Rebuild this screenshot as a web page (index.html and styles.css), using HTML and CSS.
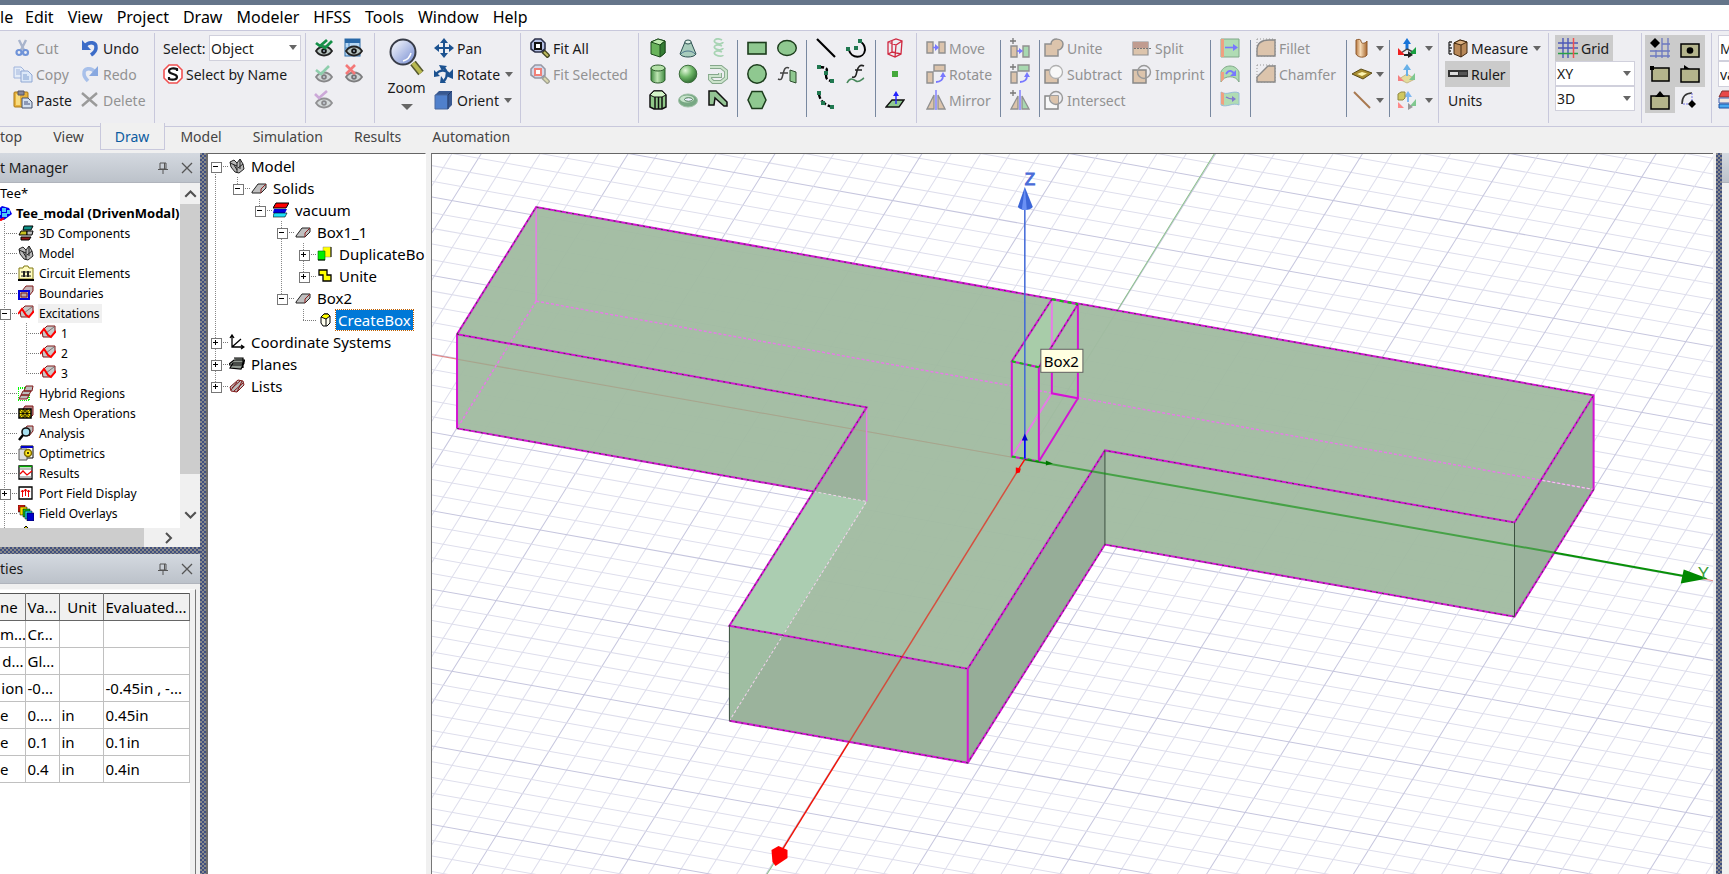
FILE: index.html
```html
<!DOCTYPE html>
<html lang="en">
<head>
    <meta charset="UTF-8">
    <meta name="viewport" content="width=device-width, initial-scale=1.0">
    <title>Tee - HFSS Modeler</title>
    <link rel="stylesheet" href="styles.css">
</head>
<body>
    <svg class="defs" aria-hidden="true">
        <defs>
            <linearGradient id="gGreen"><stop offset="0" stop-color="#3f8a40"/><stop offset=".45" stop-color="#bfe6b4"/><stop offset="1" stop-color="#3f8a40"/></linearGradient>
            <radialGradient id="gBall" cx=".35" cy=".3" r=".75"><stop offset="0" stop-color="#e4f8dc"/><stop offset=".5" stop-color="#6fb768"/><stop offset="1" stop-color="#2d6a30"/></radialGradient>
            <linearGradient id="gLens" x1="0" y1="0" x2="1" y2="1"><stop offset="0" stop-color="#fff"/><stop offset="1" stop-color="#7088d0"/></linearGradient>
            <linearGradient id="gTube"><stop offset="0" stop-color="#b87840"/><stop offset=".4" stop-color="#f6dcb8"/><stop offset="1" stop-color="#a86830"/></linearGradient>
        </defs>
        <symbol id="cut" viewBox="0 0 20 20"><path d="M6 2l5 10M13 2L8 12" stroke="#a8b4cc" stroke-width="2.4" fill="none"/><circle cx="6" cy="14.500" r="2.500" fill="none" stroke="#6f93d8" stroke-width="2.200"/><circle cx="12.500" cy="14.500" r="2.500" fill="none" stroke="#6f93d8" stroke-width="2.200"/></symbol>
        <symbol id="copy" viewBox="0 0 20 20"><path d="M1 3h7l3 3v8H1z" fill="#e4ecf8" stroke="#a0b4dc"/><path d="M3 6h4M3 8h5M3 10h5" stroke="#a0b4dc"/><path d="M8 7h7l4 4v7H8z" fill="#dce8f8" stroke="#90a8d4"/><path d="M10 11h4M10 13h6M10 15h6" stroke="#80a0d0"/></symbol>
        <symbol id="paste" viewBox="0 0 20 20"><rect x="1" y="2" width="14" height="15" rx="1" fill="#e8b23c" stroke="#a87818"/><rect x="3" y="4" width="4" height="11" fill="#f8dc80"/><path d="M5 1h6v4H5z" fill="#889" stroke="#556"/><path d="M9 8h6l4 4v6H9z" fill="#d4e0f0" stroke="#44506c"/><path d="M11 12h4M11 14h6" stroke="#44507c"/></symbol>
        <symbol id="undo" viewBox="0 0 20 20"><path d="M5 8c4-5 12-4 11 2 0 3-2 5-5 7" fill="none" stroke="#3c6cc8" stroke-width="3.600"/><path d="M2 2v10h9z" fill="#3c6cc8"/></symbol>
        <symbol id="redo" viewBox="0 0 20 20"><path d="M15 8C11 3 3 4 4 10c0 3 2 5 4 7" fill="none" stroke="#a8c0ea" stroke-width="3.600"/><path d="M18 2v10H9z" fill="#88a8e0"/></symbol>
        <symbol id="del" viewBox="0 0 20 20"><path d="M2 3l15 13M17 3L2 16" stroke="#9a9a9a" stroke-width="2.400"/></symbol>
        <symbol id="byname" viewBox="0 0 20 20"><path d="M6 1h8l5 5v8l-5 5H6l-5-5V6z" fill="#fff" stroke="#f05050" stroke-width="1.600"/><path d="M14 7V5c-3-1-8-1-8 2 0 4 8 2 8 6 0 3-5 3-8 2v-2" fill="none" stroke="#111" stroke-width="2.200"/></symbol>
        <symbol id="eye" viewBox="0 0 20 20"><path d="M2 13c4-6 12-6 16 0-4 6-12 6-16 0z" fill="#b8c4c0" stroke="#222" stroke-width="1.800"/><circle cx="10" cy="13" r="2.800" fill="#111"/><circle cx="10" cy="13" r="1" fill="#9ab"/></symbol>
        <symbol id="showall" viewBox="0 0 20 20"><use href="#eye"/><path d="M2 5l4 3 7-6M7 7l4 3 7-7" fill="none" stroke="#149048" stroke-width="2.800"/></symbol>
        <symbol id="showone" viewBox="0 0 20 20"><g opacity=".5"><use href="#eye"/><path d="M2 6l5 4 8-8" fill="none" stroke="#30b068" stroke-width="2.600"/></g></symbol>
        <symbol id="showtab" viewBox="0 0 20 20"><rect x="1" y="1" width="15" height="17" fill="#b8d8f4" stroke="#2c6ca8"/><path d="M1 1h15v4H1z" fill="#2868a8"/><path d="M5 5v13M1 10h15" stroke="#4888c8"/><use href="#eye"/></symbol>
        <symbol id="hide" viewBox="0 0 20 20"><g opacity=".55"><use href="#eye"/></g><path d="M2 1l9 9M11 1l-9 9" stroke="#f47878" stroke-width="2.600"/></symbol>
        <symbol id="hidep" viewBox="0 0 20 20"><g opacity=".45"><use href="#eye"/></g><path d="M1 4l4 4 8-7" fill="none" stroke="#cca8d8" stroke-width="2.600"/></symbol>
        <symbol id="lens" viewBox="0 0 36 38"><path d="M24 25l8 10" stroke="#555830" stroke-width="7"/><path d="M24 25l8 10" stroke="#b8b850" stroke-width="4"/><circle cx="14" cy="14" r="12.500" fill="url(#gLens)" stroke="#383c48" stroke-width="2"/><path d="M22 15c-1 4-4 7-8 8" fill="none" stroke="#fff" stroke-width="1.500"/></symbol>
        <symbol id="pan" viewBox="0 0 20 20"><path d="M10 3v14M3 10h14" stroke="#1c5290" stroke-width="2"/><path d="M10 0l4 5H6zM10 20l4-5H6zM0 10l5-4v8zM20 10l-5-4v8z" fill="#1c5290"/></symbol>
        <symbol id="rot" viewBox="0 0 20 20"><path d="M9 3c5 4 5 9 1 14M2 10c4-5 10-5 16 3" stroke="#1c5290" stroke-width="2.200" fill="none"/><path d="M5 1l8 1-5 5zM6 19l1-7 5 7zM0 13V6l6 6zM19 5v10l-7-3z" fill="#1c5290"/></symbol>
        <symbol id="orient" viewBox="0 0 20 20"><path d="M1 5l4-4h13v14l-4 4H1z" fill="#385890"/><path d="M1 5h13v14H1z" fill="#5080cc" stroke="#4868a0"/><path d="M14 5l4-4M14 5v14" stroke="#203868"/></symbol>
        <symbol id="fit" viewBox="0 0 20 20"><path d="M13 13l6 6" stroke="#444620" stroke-width="4.600"/><path d="M14 14l4 4" stroke="#c0bc60" stroke-width="2"/><path d="M5 1h6l4 4v6l-4 3H5l-4-3V5z" fill="#b4c0e4" stroke="#2c3048" stroke-width="1.600"/><rect x="5" y="5" width="6" height="6" fill="#fff" stroke="#111" stroke-width="2"/></symbol>
        <symbol id="fitsel" viewBox="0 0 20 20"><g opacity=".45"><use href="#fit"/></g><rect x="5" y="5" width="6" height="6" fill="#fff" stroke="#f08078" stroke-width="2"/></symbol>

        <symbol id="box" viewBox="0 0 20 20"><path d="M3 4l7-3 7 2v12l-5 4-9-3z" fill="#6ab45c" stroke="#1c4c1c"/><path d="M3 4l7-3 7 2-5 4z" fill="#c0ecb0" stroke="#1c4c1c"/><path d="M12 7l5-4v12l-5 4z" fill="#347c34" stroke="#1c4c1c"/></symbol>
        <symbol id="cone" viewBox="0 0 20 20"><path d="M7 4l-5 12c2 4 14 4 16 0L13 4z" fill="#a8ccbc" stroke="#2c5050"/><ellipse cx="10" cy="4" rx="3.200" ry="2" fill="#e0f0e8" stroke="#2c5050"/><path d="M3 16c3-4 11-4 14 0" fill="none" stroke="#507890"/></symbol>
        <symbol id="helix" viewBox="0 0 20 20"><path d="M14 2C8-1 4 3 8 5s7 0 7-1M14 8C8 5 4 9 8 11s7 0 7-1M14 14c-6-3-10 1-6 3s7 1 7 0" fill="none" stroke="#a8d4b4" stroke-width="1.800"/></symbol>
        <symbol id="cyl" viewBox="0 0 20 20"><path d="M3 4v12c1 4 13 4 14 0V4z" fill="url(#gGreen)" stroke="#2c5c2c"/><ellipse cx="10" cy="4" rx="7" ry="3" fill="#b4e0a8" stroke="#2c5c2c"/></symbol>
        <symbol id="ball" viewBox="0 0 20 20"><circle cx="10" cy="10" r="8.800" fill="url(#gBall)" stroke="#3c6c3c"/></symbol>
        <symbol id="spiral" viewBox="0 0 20 20"><path d="M2 3h11l5 4v7l-5 4H5l-3-3v-3h10V9" fill="none" stroke="#86a88c" stroke-width="4"/><path d="M2 3h11l5 4v7l-5 4H5l-3-3v-3h10V9" fill="none" stroke="#cce4cc" stroke-width="2.200"/></symbol>
        <symbol id="prism" viewBox="0 0 20 20"><path d="M2 5l4-4h8l4 4v12l-4 2H6l-4-2z" fill="#90c888" stroke="#111" stroke-width="1.500"/><path d="M2 5l4 2h8l4-2-4-4H6z" fill="#d4f4c8" stroke="#111"/><path d="M7 7v12M10.500 7v12M14 7v12" stroke="#111" stroke-width="1.500"/></symbol>
        <symbol id="torus" viewBox="0 0 20 20"><ellipse cx="10" cy="10.500" rx="9.500" ry="6.500" fill="#78a884" stroke="#9fc0a6"/><ellipse cx="9" cy="9" rx="7" ry="3.500" fill="#c8e4cc"/><ellipse cx="10.500" cy="9.500" rx="4" ry="1.800" fill="#eef" stroke="#4c7c58"/></symbol>
        <symbol id="bond" viewBox="0 0 20 20"><path d="M1 1h7l11 11v4h-3L7 8l-1 7H1z" fill="#94c494" stroke="#111" stroke-width="1.500"/></symbol>
        <symbol id="rect" viewBox="0 0 20 20"><rect x="1" y="4.500" width="18" height="11.500" fill="#8fc890" stroke="#1c3c1c" stroke-width="1.600"/></symbol>
        <symbol id="ell" viewBox="0 0 20 20"><ellipse cx="10" cy="10" rx="9.300" ry="7.500" fill="#8fc890" stroke="#1c3c1c" stroke-width="1.400"/></symbol>
        <symbol id="circ" viewBox="0 0 20 20"><circle cx="10" cy="10" r="9.200" fill="#8fc890" stroke="#1c3c1c" stroke-width="1.500"/></symbol>
        <symbol id="eqs" viewBox="0 0 20 20"><path d="M1 15c4 2 4-1 5-5s2-8 6-6M3 9h8" fill="none" stroke="#444" stroke-width="1.500"/><path d="M13 6l6 2v11l-6-2z" fill="#8fc890" stroke="#2c4c2c"/></symbol>
        <symbol id="hex" viewBox="0 0 20 20"><path d="M5 1.500h10l4 8.500-4 8.500H5L1 10z" fill="#8fc890" stroke="#1c3c1c" stroke-width="1.500"/></symbol>
        <symbol id="line" viewBox="0 0 20 20"><path d="M1 1l18 18" stroke="#000" stroke-width="2.200"/></symbol>
        <symbol id="arc3" viewBox="0 0 20 20"><path d="M3 12c2 9 15 9 16 0 0-4-1-6-4-8" fill="none" stroke="#000" stroke-width="2"/><path d="M0 9h4v4H0zM8 8h4v4H8zM12 1h4v4h-4z" fill="#207850"/></symbol>
        <symbol id="spline" viewBox="0 0 20 20"><path d="M3 3c12 0 7 5 7 7s-1 7 7 7" fill="none" stroke="#000" stroke-width="2.400" stroke-dasharray="5 2"/><path d="M1 1h4v4H1zM8 7h4v4H8zM14 15h4v4h-4z" fill="#207850"/></symbol>
        <symbol id="eqc" viewBox="0 0 20 20"><path d="M6 13c4 1 4-2 5-6s3-7 7-5M9 6h7" fill="none" stroke="#222" stroke-width="1.600"/><path d="M1 19c3-6 6-4 9-2s6-2 8-3" fill="none" stroke="#48885c" stroke-width="1.600"/></symbol>
        <symbol id="arcc" viewBox="0 0 20 20"><path d="M3 3c0 7 5 12 14 14" fill="none" stroke="#000" stroke-width="2.400" stroke-dasharray="6 2"/><path d="M1 1h4v4H1zM5 11h4v4H5zM14 15h4v4h-4z" fill="#207850"/></symbol>
        <symbol id="region" viewBox="0 0 20 20"><path d="M3 4l8-3 6 2-1 13-6 3-7-3zM3 4l8 3 6-4M11 7l-1 12M7 2v12l-4 2M7 14l9 2" fill="none" stroke="#d02840" stroke-width="1.300"/></symbol>
        <symbol id="point" viewBox="0 0 20 20"><path d="M7 7h6v6H7z" fill="#44a83c"/></symbol>
        <symbol id="plane" viewBox="0 0 20 20"><path d="M1 17l6-7h12l-5 7z" fill="#8fc890" stroke="#111" stroke-width="1.300"/><path d="M11 14V4" stroke="#22f" stroke-width="1.400"/><path d="M11 1l3 5H8z" fill="#22f"/></symbol>

        <symbol id="move" viewBox="0 0 20 20"><path d="M1 4h6v11H1zM13 4h6v11h-6z" fill="#dcc4ac" stroke="#909090" stroke-width="1.400"/><path d="M7 9.500h3" stroke="#7878ff" stroke-width="1.600"/><path d="M9 6l4 3.500L9 13z" fill="#7878ff"/></symbol>
        <symbol id="rotate" viewBox="0 0 20 20"><path d="M1 8h6v11H1zM8 1h11v6H8z" fill="#dcc4ac" stroke="#909090" stroke-width="1.400"/><path d="M10 18c5 0 7-3 7-6" fill="none" stroke="#7878ff" stroke-width="1.800"/><path d="M17 8l3 5h-6z" fill="#7878ff"/></symbol>
        <symbol id="mirror" viewBox="0 0 20 20"><path d="M8 5v14H1zM12 5v14h7z" fill="#dcc4ac" stroke="#909090" stroke-width="1.300"/><path d="M10 0v20" stroke="#8080ff" stroke-width="1.500"/></symbol>
        <symbol id="dmove" viewBox="0 0 20 20"><path d="M1 8h6v11H1z" fill="#dcc4ac" stroke="#909090" stroke-width="1.400"/><path d="M13 8h6v11h-6z" fill="#a8d8b0" stroke="#909090" stroke-width="1.400"/><path d="M3 0v6M0 3h6" stroke="#777" stroke-width="1.300"/><path d="M7 13h3" stroke="#7878ff" stroke-width="1.600"/><path d="M9 10l4 3-4 3z" fill="#7878ff"/></symbol>
        <symbol id="drot" viewBox="0 0 20 20"><path d="M1 8h6v11H1z" fill="#dcc4ac" stroke="#909090" stroke-width="1.400"/><path d="M8 1h11v6H8z" fill="#a8d8b0" stroke="#909090" stroke-width="1.400"/><path d="M3 0v6M0 3h6" stroke="#777" stroke-width="1.300"/><path d="M10 18c5 0 7-3 7-6" fill="none" stroke="#7878ff" stroke-width="1.800"/><path d="M17 8l3 5h-6z" fill="#7878ff"/></symbol>
        <symbol id="dmir" viewBox="0 0 20 20"><path d="M8 6v13H1z" fill="#dcc4ac" stroke="#909090" stroke-width="1.300"/><path d="M12 6v13h7z" fill="#a8d8b0" stroke="#909090" stroke-width="1.300"/><path d="M3 0v6M0 3h6" stroke="#777" stroke-width="1.300"/><path d="M10 0v20" stroke="#8080ff" stroke-width="1.500"/></symbol>
        <symbol id="unite" viewBox="0 0 20 20"><path d="M1 6h6c0-7 12-6 12 0 0 4-3 6-5 6v6H1z" fill="#dcc4ac" stroke="#909090" stroke-width="1.500"/></symbol>
        <symbol id="subtract" viewBox="0 0 20 20"><path d="M1 6h13v13H1z" fill="#dcc4ac" stroke="#888" stroke-width="1.500"/><circle cx="12" cy="8" r="6.500" fill="#f8f8f8" stroke="#b0b0b0" stroke-width="1.300"/></symbol>
        <symbol id="intersect" viewBox="0 0 20 20"><path d="M1 6h13v13H1z" fill="#f8f8f8" stroke="#888" stroke-width="1.500"/><path d="M6 6h8v8C9 15 6 11 6 6z" fill="#dcc4ac"/><circle cx="12" cy="8" r="6.500" fill="none" stroke="#999" stroke-width="1.400"/></symbol>
        <symbol id="split" viewBox="0 0 20 20"><path d="M1 4h15v13H1z" fill="#dcc4ac" stroke="#909090" stroke-width="1.200"/><path d="M1 4h15v6H1z" fill="#c09c90"/><path d="M2 10.500h18" stroke="#777" stroke-dasharray="2 1"/></symbol>
        <symbol id="imprint" viewBox="0 0 20 20"><path d="M1 6h13v13H1z" fill="#dcc4ac" stroke="#888" stroke-width="1.500"/><circle cx="12" cy="8" r="6.500" fill="none" stroke="#999" stroke-width="1.400"/></symbol>
        <symbol id="sweep1" viewBox="0 0 20 20"><path d="M1 1h18v18H1z" fill="#b0dcb4" stroke="#80a888"/><path d="M1 1h3v18H1z" fill="#f0a080"/><path d="M5 9.500h9" stroke="#7878ff" stroke-width="1.600"/><path d="M13 6l5 3.500-5 3.500z" fill="#7878ff"/></symbol>
        <symbol id="sweep2" viewBox="0 0 20 20"><path d="M1 18V8c3-8 15-8 18 0v10c-3-7-15-7-18 0z" fill="#b0dcb4" stroke="#80a888"/><path d="M1 8h3v7l-3 3z" fill="#f0a080"/><path d="M6 10c3-5 7-3 8 0" fill="none" stroke="#7878ff" stroke-width="1.800"/><path d="M16 6v6h-6z" fill="#7878ff"/></symbol>
        <symbol id="sweep3" viewBox="0 0 20 20"><path d="M1 2c6 4 12-2 18 1v12c-6-3-12 3-18 0z" fill="#b0dcb4" stroke="#98bcd8"/><path d="M1 2l3 1v12l-3-1z" fill="#f0a080"/><path d="M6 7c3 2 4 2 7 2" fill="none" stroke="#8078d0" stroke-width="1.500"/><path d="M12 6l4 3-4 3z" fill="#8078d0"/></symbol>
        <symbol id="fillet" viewBox="0 0 20 20"><path d="M1 1h18v17H1z" fill="none" stroke="#999" stroke-dasharray="1 2"/><path d="M1 18v-6C1 5 6 2 13 2h6v16z" fill="#dcc4ac" stroke="#888" stroke-width="1.400"/></symbol>
        <symbol id="chamfer" viewBox="0 0 20 20"><path d="M1 1h18v17H1z" fill="none" stroke="#999" stroke-dasharray="1 2"/><path d="M1 18v-5L12 2h7v16z" fill="#dcc4ac" stroke="#888" stroke-width="1.400"/></symbol>
        <symbol id="tube" viewBox="0 0 20 20"><path d="M4 2v14c2 4 9 4 11 1V3c-2 3-6 3-6 0 0-2-3-2-5-1z" fill="url(#gTube)" stroke="#905c30"/></symbol>
        <symbol id="sheet" viewBox="0 0 20 20"><path d="M0 10l9-5 11 4-9 6z" fill="#a88c30" stroke="#5c4c18"/><path d="M5 10l5-2 5 1.500-5 2.500z" fill="#fcf4b0"/></symbol>
        <symbol id="wire" viewBox="0 0 20 20"><path d="M2 2l16 16" stroke="#a87850" stroke-width="2"/></symbol>
        <symbol id="cs" viewBox="0 0 20 20"><path d="M10 11V4" stroke="#1874d8" stroke-width="3"/><path d="M10 0l4 6H6z" fill="#1874d8"/><path d="M10 11l-6 4M10 11l6 3" stroke="#444" stroke-width="1.500"/><path d="M1 10v7h7z" fill="#f02020"/><path d="M19 9v7h-7z" fill="#18a040"/><path d="M7 17h5" stroke="#222" stroke-width="2"/><path d="M11 13l5 4-5 3z" fill="#222"/></symbol>
        <symbol id="cs2" viewBox="0 0 20 20"><path d="M2 15l8-5 8 5-8 4z" fill="#e4dc9c" stroke="#c8b888"/><path d="M10 12V4" stroke="#68b0e8" stroke-width="2"/><path d="M10 0l4 6H6z" fill="#68b0e8"/><path d="M1 11v6h6z" fill="#f48080"/><path d="M18 9v7h-6z" fill="#80c890"/></symbol>
        <symbol id="cs3" viewBox="0 0 20 20"><path d="M11 12V5" stroke="#80b8f0" stroke-width="2"/><path d="M11 1l4 6H7z" fill="#80b8f0"/><path d="M1 4l3-2h4v6l-2 2H1z" fill="#d0c860" stroke="#908840"/><path d="M1 12v6h6z" fill="#f88"/><path d="M19 9v7h-6z" fill="#80c890"/><path d="M11 13l5 4-5 3z" fill="#999"/></symbol>
        <symbol id="measure" viewBox="0 0 20 20"><path d="M1 4v12M1 4h3M1 7h2M1 10h3M1 13h2M1 16h3" stroke="#333" stroke-width="1.300"/><path d="M6 5l6-3 7 2v11l-6 4-7-3z" fill="#b88858" stroke="#402810"/><path d="M6 5l6-3 7 2-6 3z" fill="#dcb080" stroke="#402810"/><path d="M13 7v12" stroke="#402810"/></symbol>
        <symbol id="ruler" viewBox="0 0 20 20"><path d="M0 6h20v7H0z" fill="#333"/><path d="M2 8h8v3H2z" fill="#ddd"/><path d="M11 8h8v3h-8z" fill="#555"/></symbol>
        <symbol id="gridic" viewBox="0 0 20 20"><path d="M5 0v20M10 0v20M0 5h20M0 10h20" stroke="#4c58b8" stroke-width="1.400"/><path d="M0 15.500h20" stroke="#28a048" stroke-width="1.500"/><path d="M15.500 0v20" stroke="#f05050" stroke-width="1.500"/></symbol>
        <symbol id="snapgrid" viewBox="0 0 20 20"><path d="M12 0v20M18 0v20M6 12v8M0 13h20M0 18h20M12 6h8" stroke="#6c78c0" stroke-width="1.300"/><path d="M5 0l5 5-5 5-5-5z" fill="#000"/></symbol>
        <symbol id="snapcen" viewBox="0 0 20 20"><path d="M1 6h18v13H1z" fill="#b4b48c" stroke="#000" stroke-width="1.500"/><circle cx="10" cy="12.500" r="3.300"/></symbol>
        <symbol id="snapver" viewBox="0 0 20 20"><path d="M2 4h17v13H2z" fill="#b4b48c" stroke="#000" stroke-width="1.500"/><path d="M0 2h4v4H0z"/></symbol>
        <symbol id="snapmid" viewBox="0 0 20 20"><path d="M1 5h18v13H1z" fill="#b4b48c" stroke="#000" stroke-width="1.500"/><path d="M4 1l6 4H4z"/></symbol>
        <symbol id="snapedge" viewBox="0 0 20 20"><path d="M1 6h18v13H1z" fill="#b4b48c" stroke="#000" stroke-width="1.500"/><path d="M10 1l5 6H5z"/></symbol>
        <symbol id="snapquad" viewBox="0 0 20 20"><path d="M2 14C2 6 6 3 12 3" fill="none" stroke="#333" stroke-width="1.600"/><path d="M12 3v10M3 14h8" stroke="#7878e8" stroke-dasharray="2 1"/><path d="M12 10l4 4-4 4-4-4z"/></symbol>
        <symbol id="mat" viewBox="0 0 20 20"><path d="M4 1h12l4 6H1z" fill="#e84848" stroke="#803030"/><path d="M1 8h19l-3 5H1z" fill="#f0e8e0" stroke="#4060b0"/><path d="M1 14h19l-4 4H1z" fill="#48a8f0" stroke="#2050a0"/></symbol>

        <symbol id="t-slab" viewBox="0 0 16 16"><path d="M1 12l6-8h8v4l-5 5H1z" fill="#c0c0c0" stroke="#222"/><path d="M10 13V9l5-5" fill="none" stroke="#902020"/></symbol>
        <symbol id="t-design" viewBox="0 0 16 16"><path d="M0 12l8 3 8-6-3-6-7-2-6 5z" fill="#00e"/><path d="M1 6h4v4H1zM6 3h4v4H6zM6 8h5v4H6zM11 5h3v4h-3z" fill="#4cc8f8"/><path d="M0 14l5 1 3-2" stroke="#f00" stroke-width="2" fill="none"/></symbol>
        <symbol id="t-comp" viewBox="0 0 16 16"><path d="M6 1h9l-2 4H5z" fill="#109088" stroke="#000"/><path d="M1 10l2-4h6v4H1z" fill="#c8c020" stroke="#000"/><path d="M9 10V6h6l-1 4z" fill="#bbb" stroke="#000"/><path d="M3 12h10l-2 3H3z" fill="#901818" stroke="#000"/></symbol>
        <symbol id="t-model" viewBox="0 0 16 16"><path d="M1 4l4-2 3 3 3-4 3 5 1 5-5 4-4-1-4-5z" fill="#b8b8b8" stroke="#222"/><path d="M8 5v10M11 1v10M5 7l3 5M1 5l7 3M14 6l-5 4" stroke="#222" fill="none"/></symbol>
        <symbol id="t-circ" viewBox="0 0 16 16"><path d="M1 3h4l1-2h4l1 2h4v11H1z" fill="#fffcc0" stroke="#807810"/><path d="M0 15h16" stroke="#000" stroke-width="2"/><path d="M5 6h2v6H5zM9 6h2v6H9z" fill="#222"/><path d="M3 7h10M3 11h10" stroke="#222"/></symbol>
        <symbol id="t-bound" viewBox="0 0 16 16"><path d="M4 6l4-5h7v5l-4 5" fill="#c8b8b8" stroke="#801818"/><path d="M1 6h10v8H1z" fill="#c0b0b0" stroke="#00d" stroke-width="2"/><path d="M3 8h6v4H3z" fill="#b8a8a8" stroke="#801818"/></symbol>
        <symbol id="t-exc" viewBox="0 0 16 16"><path d="M2 6l5-5h8v7l-4 4H3z" fill="#c8c8c8" stroke="#801818"/><path d="M6 8l8-6" stroke="#777"/><path d="M0 9l4-5 4 6 3 2 5-6" fill="none" stroke="#f00" stroke-width="2"/></symbol>
        <symbol id="t-hyb" viewBox="0 0 16 16"><path d="M0 3h11v13H0z" fill="none" stroke="#0f0" stroke-width="2" stroke-dasharray="1 1"/><path d="M1 14l2-4h8l-2 4zM3 10l2-4h8l-2 4zM6 6l2-5h7l-1 5z" fill="#bbb" stroke="#801818"/></symbol>
        <symbol id="t-mesh" viewBox="0 0 16 16"><path d="M5 4l2-3h8v9l-3 3" fill="#b88" stroke="#801818"/><path d="M1 4h12v9H1z" fill="#ffe800" stroke="#000" stroke-width="1.500"/><path d="M1 8.500h12M5 4v9M9 4v9M1 4l8 9M5 4l8 9M13 4l-8 9M9 4l-8 9" stroke="#000" stroke-width=".8"/></symbol>
        <symbol id="t-ana" viewBox="0 0 16 16"><path d="M6 5l3-4h6v5l-4 5" fill="#bbb" stroke="#801818"/><circle cx="8" cy="7" r="4" fill="#a8e0f0" stroke="#111" stroke-width="1.600"/><path d="M5 10l-4 5" stroke="#000" stroke-width="2.500"/></symbol>
        <symbol id="t-opt" viewBox="0 0 16 16"><path d="M3 1h12v12H3z" fill="#fff" stroke="#000"/><path d="M3 1h12v2H3z" fill="#00c"/><path d="M1 4h8v11H1z" fill="#ddd" stroke="#555"/><circle cx="10" cy="8" r="3.500" fill="#ffe820" stroke="#806c00" stroke-width="1.500"/><circle cx="10" cy="8" r="1"/></symbol>
        <symbol id="t-res" viewBox="0 0 16 16"><path d="M1 1h13v13H1z" fill="#fff" stroke="#000" stroke-width="1.300"/><path d="M1 1.500h13" stroke="#0a0" stroke-width="1.500"/><path d="M1 4h13M1 12h13" stroke="#777"/><path d="M2 9l3-3 4 4 5-4" fill="none" stroke="#e00" stroke-width="1.300"/></symbol>
        <symbol id="t-port" viewBox="0 0 16 16"><path d="M1 2h13v12H1z" fill="#fff" stroke="#000" stroke-width="1.300"/><path d="M4.500 12V5M7.500 11V4M10.500 12V5M3 7l1.500-2L6 7M6 6l1.500-2L9 6M9 7l1.500-2L12 7" fill="none" stroke="#e00"/></symbol>
        <symbol id="t-over" viewBox="0 0 16 16"><path d="M0 0h7v7H0z" fill="#e82010" stroke="#000" stroke-width=".5"/><path d="M2 2h7v8H2z" fill="#f8e000" stroke="#000" stroke-width=".5"/><path d="M5 4h7v8H5z" fill="#10c020" stroke="#000" stroke-width=".5"/><path d="M7 6h7v8H7z" fill="#20c8e8" stroke="#000" stroke-width=".5"/><path d="M9 8h7v8H9z" fill="#00c" stroke="#000" stroke-width=".5"/></symbol>
        <symbol id="t-next" viewBox="0 0 16 16"><path d="M8 1l4 4H4z" fill="#e0d000" stroke="#000"/></symbol>
        <symbol id="t-vac" viewBox="0 0 16 16"><path d="M3 1h13l-3 5H0z" fill="#f00" stroke="#000"/><path d="M1 7h13l-2 4H0z" fill="#00d"/><path d="M1 11h13l-2 4H0z" fill="#20e0f8" stroke="#000" stroke-width=".6"/></symbol>
        <symbol id="t-dup" viewBox="0 0 16 16"><path d="M6 1h8v10H6z" fill="#ff0" stroke="#888" stroke-width=".5"/><path d="M1 5h7v9H1z" fill="#0e0" stroke="#060" stroke-width=".6"/><path d="M14 1v10M8 14H1" stroke="#000"/></symbol>
        <symbol id="t-unite" viewBox="0 0 16 16"><path d="M2 2h8v5h4v6H6V7H2z" fill="#ff0" stroke="#000" stroke-width="1.300"/></symbol>
        <symbol id="t-create" viewBox="0 0 16 16"><path d="M4 5l3-3h4l2 2v7l-3 3H6l-2-3z" fill="#fffff0" stroke="#000"/><path d="M4 5l3-3h4l2 2-4 3z" fill="#ff0" stroke="#000"/><path d="M9 7v7" stroke="#000"/></symbol>
        <symbol id="t-cs" viewBox="0 0 16 16"><path d="M3 2v11h11M3 13L12 5M1 4l2-3 2 3M12 11l3 2-3 2" fill="none" stroke="#000" stroke-width="1.300"/></symbol>
        <symbol id="t-planes" viewBox="0 0 16 16"><path d="M0 8l5-4h11l-3 5H0zM1 12l3-5h11l-3 6zM5 2h9v10" fill="#909890" stroke="#000" stroke-width="1.200"/></symbol>
        <symbol id="t-lists" viewBox="0 0 16 16"><path d="M1 9l8-7 5 1 1 4-7 7-6-1z" fill="#bbb" stroke="#801818"/><path d="M3 10l8-7M5 13l9-8M2 12l6-8M8 14l5-11" stroke="#801818" fill="none"/></symbol>
        <symbol id="pin" viewBox="0 0 12 12"><path d="M3 1h6v6H3zM1 7.500h10M6 8v4M7.500 1v6" fill="none" stroke="#555"/></symbol>
        <symbol id="close" viewBox="0 0 12 12"><path d="M1 1l10 10M11 1L1 11" stroke="#555" stroke-width="1.300"/></symbol>
    </svg>

    <div class="titlebar"></div>
    <nav class="menubar">
        <a href="#">le</a><a href="#">Edit</a><a href="#">View</a><a href="#">Project</a><a href="#">Draw</a><a href="#">Modeler</a><a href="#">HFSS</a><a href="#">Tools</a><a href="#">Window</a><a href="#">Help</a>
    </nav>

    <div class="ribbon">
        <div class="group g-edit">
            <div class="stack">
                <button class="off"><svg><use href="#cut"/></svg>Cut</button>
                <button class="off"><svg><use href="#copy"/></svg>Copy</button>
                <button><svg><use href="#paste"/></svg>Paste</button>
            </div>
            <div class="stack">
                <button><svg><use href="#undo"/></svg>Undo</button>
                <button class="off"><svg><use href="#redo"/></svg>Redo</button>
                <button class="off"><svg><use href="#del"/></svg>Delete</button>
            </div>
        </div>
        <div class="group g-select">
            <div class="stack">
                <div class="field"><label for="selmode">Select:</label><span class="combo"><select id="selmode"><option>Object</option></select></span></div>
                <button><svg><use href="#byname"/></svg>Select by Name</button>
            </div>
        </div>
        <div class="group g-show">
            <div class="icons">
                <button aria-label="Show all"><svg><use href="#showall"/></svg></button>
                <button aria-label="Show selection"><svg><use href="#showone"/></svg></button>
                <button aria-label="Hide others"><svg><use href="#hidep"/></svg></button>
                <button aria-label="Visibility table"><svg><use href="#showtab"/></svg></button>
                <button aria-label="Hide selection"><svg><use href="#hide"/></svg></button>
            </div>
        </div>
        <div class="group g-zoom">
            <button class="big"><svg><use href="#lens"/></svg>Zoom<i class="arrow"></i></button>
            <div class="stack">
                <button><svg><use href="#pan"/></svg>Pan</button>
                <button><svg><use href="#rot"/></svg>Rotate<i class="arrow"></i></button>
                <button><svg><use href="#orient"/></svg>Orient<i class="arrow"></i></button>
            </div>
        </div>
        <div class="group g-fit">
            <div class="stack">
                <button><svg><use href="#fit"/></svg>Fit All</button>
                <button class="off"><svg><use href="#fitsel"/></svg>Fit Selected</button>
            </div>
        </div>
        <div class="group g-draw">
            <div class="icons">
                <button aria-label="Box"><svg><use href="#box"/></svg></button>
                <button aria-label="Cylinder"><svg><use href="#cyl"/></svg></button>
                <button aria-label="Polyhedron"><svg><use href="#prism"/></svg></button>
                <button aria-label="Cone"><svg><use href="#cone"/></svg></button>
                <button aria-label="Sphere"><svg><use href="#ball"/></svg></button>
                <button aria-label="Torus"><svg><use href="#torus"/></svg></button>
                <button aria-label="Helix"><svg><use href="#helix"/></svg></button>
                <button aria-label="Spiral"><svg><use href="#spiral"/></svg></button>
                <button aria-label="Bondwire"><svg><use href="#bond"/></svg></button>
            </div>
            <i class="sep"></i>
            <div class="icons">
                <button aria-label="Rectangle"><svg><use href="#rect"/></svg></button>
                <button aria-label="Circle"><svg><use href="#circ"/></svg></button>
                <button aria-label="Polygon"><svg><use href="#hex"/></svg></button>
                <button aria-label="Ellipse"><svg><use href="#ell"/></svg></button>
                <button aria-label="Equation surface"><svg><use href="#eqs"/></svg></button>
            </div>
            <i class="sep"></i>
            <div class="icons">
                <button aria-label="Line"><svg><use href="#line"/></svg></button>
                <button aria-label="Spline"><svg><use href="#spline"/></svg></button>
                <button aria-label="Center arc"><svg><use href="#arcc"/></svg></button>
                <button aria-label="Three point arc"><svg><use href="#arc3"/></svg></button>
                <button aria-label="Equation curve"><svg><use href="#eqc"/></svg></button>
            </div>
            <i class="sep"></i>
            <div class="icons">
                <button aria-label="Region"><svg><use href="#region"/></svg></button>
                <button aria-label="Point"><svg><use href="#point"/></svg></button>
                <button aria-label="Plane"><svg><use href="#plane"/></svg></button>
            </div>
        </div>
        <div class="group g-arrange">
            <div class="stack s-move">
                <button class="off"><svg><use href="#move"/></svg>Move</button>
                <button class="off"><svg><use href="#rotate"/></svg>Rotate</button>
                <button class="off"><svg><use href="#mirror"/></svg>Mirror</button>
            </div>
            <i class="sep"></i>
            <div class="icons s-dup">
                <button aria-label="Duplicate along line"><svg><use href="#dmove"/></svg></button>
                <button aria-label="Duplicate around axis"><svg><use href="#drot"/></svg></button>
                <button aria-label="Duplicate mirror"><svg><use href="#dmir"/></svg></button>
            </div>
            <i class="sep"></i>
            <div class="stack s-unite">
                <button class="off"><svg><use href="#unite"/></svg>Unite</button>
                <button class="off"><svg><use href="#subtract"/></svg>Subtract</button>
                <button class="off"><svg><use href="#intersect"/></svg>Intersect</button>
            </div>
            <div class="stack s-split">
                <button class="off"><svg><use href="#split"/></svg>Split</button>
                <button class="off"><svg><use href="#imprint"/></svg>Imprint</button>
            </div>
            <i class="sep"></i>
            <div class="icons s-sweep">
                <button aria-label="Sweep along vector"><svg><use href="#sweep1"/></svg></button>
                <button aria-label="Sweep around axis"><svg><use href="#sweep2"/></svg></button>
                <button aria-label="Sweep along path"><svg><use href="#sweep3"/></svg></button>
            </div>
            <i class="sep"></i>
            <div class="stack s-fillet">
                <button class="off"><svg><use href="#fillet"/></svg>Fillet</button>
                <button class="off"><svg><use href="#chamfer"/></svg>Chamfer</button>
            </div>
            <i class="sep"></i>
            <div class="stack s-surf">
                <button aria-label="Surface"><svg><use href="#tube"/></svg><i class="arrow"></i></button>
                <button aria-label="Sheet"><svg><use href="#sheet"/></svg><i class="arrow"></i></button>
                <button aria-label="Edge"><svg><use href="#wire"/></svg><i class="arrow"></i></button>
            </div>
            <i class="sep"></i>
            <div class="stack s-cs">
                <button aria-label="Relative CS"><svg><use href="#cs"/></svg><i class="arrow"></i></button>
                <button aria-label="Face CS"><svg><use href="#cs2"/></svg></button>
                <button aria-label="Object CS"><svg><use href="#cs3"/></svg><i class="arrow"></i></button>
            </div>
        </div>
        <div class="group g-measure">
            <div class="stack">
                <button><svg><use href="#measure"/></svg>Measure<i class="arrow"></i></button>
                <button class="on"><svg><use href="#ruler"/></svg>Ruler</button>
                <button>Units</button>
            </div>
        </div>
        <div class="group g-grid">
            <div class="stack">
                <button class="on"><svg><use href="#gridic"/></svg>Grid</button>
                <span class="combo"><select aria-label="Drawing plane"><option>XY</option></select></span>
                <span class="combo"><select aria-label="Movement mode"><option>3D</option></select></span>
            </div>
        </div>
        <div class="group g-snap">
            <div class="icons">
                <button class="on" aria-label="Snap to grid"><svg><use href="#snapgrid"/></svg></button>
                <button class="on" aria-label="Snap to vertex"><svg><use href="#snapver"/></svg></button>
                <button class="on" aria-label="Snap to edge"><svg><use href="#snapedge"/></svg></button>
                <button class="on" aria-label="Snap to face center"><svg><use href="#snapcen"/></svg></button>
                <button class="on" aria-label="Snap to edge center"><svg><use href="#snapmid"/></svg></button>
                <button aria-label="Snap to quadrant"><svg><use href="#snapquad"/></svg></button>
            </div>
        </div>
        <div class="group g-mat">
            <div class="stack">
                <span class="combo"><select aria-label="Model type"><option>Model</option></select></span>
                <span class="combo"><select aria-label="Material"><option>vacuum</option></select></span>
                <button aria-label="Materials"><svg><use href="#mat"/></svg></button>
            </div>
        </div>
    </div>

    <nav class="tabs">
        <a href="#">top</a><a href="#">View</a><a href="#" class="active">Draw</a><a href="#">Model</a><a href="#">Simulation</a><a href="#">Results</a><a href="#">Automation</a>
    </nav>

    <main class="work">
        <aside class="dock">
            <section class="panel manager">
                <header class="caption"><h2>t Manager</h2><svg><use href="#pin"/></svg><svg><use href="#close"/></svg></header>
                <div class="scroller">
                    <ul class="tree small">
                        <li><span class="root">Tee*</span></li>
                        <li><svg class="design"><use href="#t-design"/></svg><b>Tee_modal (DrivenModal)</b></li>
                        <li><i class="rail on"></i><svg><use href="#t-comp"/></svg><span>3D Components</span></li>
                        <li><i class="rail on"></i><svg><use href="#t-model"/></svg><span>Model</span></li>
                        <li><i class="rail on"></i><svg><use href="#t-circ"/></svg><span>Circuit Elements</span></li>
                        <li><i class="rail on"></i><svg><use href="#t-bound"/></svg><span>Boundaries</span></li>
                        <li><i class="rail on box minus"></i><svg><use href="#t-exc"/></svg><span class="hot">Excitations</span></li>
                        <li><i class="rail on pass"></i><i class="rail on"></i><svg><use href="#t-exc"/></svg><span>1</span></li>
                        <li><i class="rail on pass"></i><i class="rail on"></i><svg><use href="#t-exc"/></svg><span>2</span></li>
                        <li><i class="rail on pass"></i><i class="rail up"></i><svg><use href="#t-exc"/></svg><span>3</span></li>
                        <li><i class="rail on"></i><svg><use href="#t-hyb"/></svg><span>Hybrid Regions</span></li>
                        <li><i class="rail on"></i><svg><use href="#t-mesh"/></svg><span>Mesh Operations</span></li>
                        <li><i class="rail on"></i><svg><use href="#t-ana"/></svg><span>Analysis</span></li>
                        <li><i class="rail on"></i><svg><use href="#t-opt"/></svg><span>Optimetrics</span></li>
                        <li><i class="rail on"></i><svg><use href="#t-res"/></svg><span>Results</span></li>
                        <li><i class="rail on box plus"></i><svg><use href="#t-port"/></svg><span>Port Field Display</span></li>
                        <li><i class="rail on"></i><svg><use href="#t-over"/></svg><span>Field Overlays</span></li>
                        <li><i class="rail on pass"></i><svg><use href="#t-next"/></svg></li>
                    </ul>
                    <div class="vbar">
                        <svg viewBox="0 0 19 20"><path d="M5 13l5-5 5 5" fill="none" stroke="#505050" stroke-width="2"/></svg>
                        <div class="thumb"></div>
                        <svg viewBox="0 0 19 20"><path d="M5 7l5 5 5-5" fill="none" stroke="#505050" stroke-width="2"/></svg>
                    </div>
                </div>
                <div class="hbar"><div class="thumb"></div><svg viewBox="0 0 12 12"><path d="M4 1l5 5-5 5" fill="none" stroke="#505050" stroke-width="2"/></svg></div>
            </section>
            <div class="splitter"></div>
            <section class="panel props">
                <header class="caption"><h2>ties</h2><svg><use href="#pin"/></svg><svg><use href="#close"/></svg></header>
                <div class="sheet">
                    <table>
                        <thead><tr><th class="c-name">ne</th><th class="c-value">Va...</th><th class="c-unit">Unit</th><th>Evaluated...</th></tr></thead>
                        <tbody>
                            <tr><td>m...</td><td>Cr...</td><td></td><td></td></tr>
                            <tr><td>d...</td><td>Gl...</td><td></td><td></td></tr>
                            <tr><td>ion</td><td>-0...</td><td></td><td>-0.45in , -...</td></tr>
                            <tr><td class="left">e</td><td>0....</td><td>in</td><td>0.45in</td></tr>
                            <tr><td class="left">e</td><td>0.1</td><td>in</td><td>0.1in</td></tr>
                            <tr><td class="left">e</td><td>0.4</td><td>in</td><td>0.4in</td></tr>
                        </tbody>
                    </table>
                </div>
            </section>
        </aside>
        <div class="splitter vertical"></div>
        <section class="history">
            <ul class="tree">
                <li><i class="rail down box minus"></i><svg><use href="#t-model"/></svg><span>Model</span></li>
                <li><i class="rail on pass"></i><i class="rail up box minus"></i><svg><use href="#t-slab"/></svg><span>Solids</span></li>
                <li><i class="rail on pass"></i><i class="rail pass"></i><i class="rail up box minus"></i><svg><use href="#t-vac"/></svg><span>vacuum</span></li>
                <li><i class="rail on pass"></i><i class="rail pass"></i><i class="rail pass"></i><i class="rail on box minus"></i><svg><use href="#t-slab"/></svg><span>Box1_1</span></li>
                <li><i class="rail on pass"></i><i class="rail pass"></i><i class="rail pass"></i><i class="rail on pass"></i><i class="rail on box plus"></i><svg><use href="#t-dup"/></svg><span>DuplicateBo</span></li>
                <li><i class="rail on pass"></i><i class="rail pass"></i><i class="rail pass"></i><i class="rail on pass"></i><i class="rail up box plus"></i><svg><use href="#t-unite"/></svg><span>Unite</span></li>
                <li><i class="rail on pass"></i><i class="rail pass"></i><i class="rail pass"></i><i class="rail up box minus"></i><svg><use href="#t-slab"/></svg><span>Box2</span></li>
                <li><i class="rail on pass"></i><i class="rail pass"></i><i class="rail pass"></i><i class="rail pass"></i><i class="rail up"></i><svg><use href="#t-create"/></svg><span class="selected">CreateBox</span></li>
                <li><i class="rail on box plus"></i><svg><use href="#t-cs"/></svg><span>Coordinate Systems</span></li>
                <li><i class="rail on box plus"></i><svg><use href="#t-planes"/></svg><span>Planes</span></li>
                <li><i class="rail up box plus"></i><svg><use href="#t-lists"/></svg><span>Lists</span></li>
            </ul>
        </section>
        <section class="viewport">
            <svg viewBox="432 155 1282 719" preserveAspectRatio="xMinYMin slice">
                <g id="grid"></g>
                <path class="neg-x" d="M1024 460L1215 152M778 856L766 875"/>
                <path class="neg-y" d="M430 355L1024 460M1700 579L1716 582"/>

                <!-- tee solid -->
                <path class="face" d="M536 208L1592 396V490L1513 617L1104 545L967 763L729 721V626L813 492L457 429V335Z"/>
                <path fill="#abcdb1" d="M813 492L866 502L782 635L729 626Z"/>
                <path fill="#9fbea2" d="M729 626L782 635L729 721Z"/>
                <path fill="#9bb39c" d="M782 635L967 669V763L729 721Z"/>
                <path fill="#9bb29c" d="M866 408V502L813 492Z"/>
                <path fill="#96ad98" d="M1104 451V545L967 763V669Z"/>
                <path fill="#9ab29c" d="M1592 396V490L1513 617V523Z"/>
                <path class="ghost-y" d="M457 360L1024 460"/>

                <path class="hidden" d="M536 208V302M866 408V502"/>
                <path class="hidden dash" d="M536 302L1592 490M536 302L457 429"/>
                <path class="pale dash" d="M813 492L866 502L729 721M1541 481L1592 490"/>
                <path class="edge" d="M457 429V335L536 208L1592 396V490L1513 617L1104 545L967 763L729 721M457 335L866 408L729 626L967 669V763M967 669L1104 451L1513 523L1592 396M457 429L813 492"/>
                <path class="stitch" d="M457 335L536 208L1592 396M1592 490L1513 617L1104 545L967 763L729 721M457 335L866 408L729 626L967 669L1104 451L1513 523L1592 396M457 429L813 492"/>
                <path class="corner" d="M729 626V721M1104 451V545M1513 523V617"/>

                <!-- Box2 -->
                <path fill="#a9cfaa" fill-opacity=".8" d="M1051 300L1077 305L1038 368L1011 362Z"/>
                <path fill="#a0c8a2" fill-opacity=".8" d="M1011 362L1038 368V462L1011 457Z"/>
                <path class="axis x" stroke-opacity=".65" d="M1024 460L848 743"/>
                <path class="axis x" d="M848 743L778 856"/>
                <path fill="#f00" d="M771 850l7-4 9 4v8l-12 8-3-4z"/>
                <path class="axis y" stroke-opacity=".6" d="M1024 460L1552 553"/>
                <path class="axis y" d="M1552 553L1685 577"/>
                <path fill="#080" d="M1682 570L1706 579L1679 584Z"/>
                <path class="hidden wide" d="M1051 300V350M1051 394L1011 457"/>
                <path class="edge wide" d="M1077 305V399L1051 394V373M1011 362V457L1038 462L1077 399M1038 368V462"/>
                <path class="edge" d="M1051 300L1011 362L1038 368L1077 305Z"/>
                <path class="stitch" d="M1051 300L1011 362M1038 368L1077 305"/>
                <path class="stitch green" d="M1051 300L1077 305M1011 362L1038 368M1011 457L1038 462"/>
                <path class="axis z" d="M1024 459V205"/>
                <path fill="#3c66d8" d="M1024 188L1032 208C1029 212 1020 212 1017 208Z"/>
                <path fill="#6a90f4" d="M1024 188L1026 211H1021Z"/>
                <path stroke="#00f" stroke-width="1.500" d="M1024 459V440"/><path fill="#00c" d="M1024 434l3 7h-6z"/>
                <path stroke="#f00" d="M1024 460L1018 469"/><path fill="#f00" d="M1015 474l0-6 5 1-1 4z"/>
                <path stroke="#080" d="M1024 460L1046 464"/><path fill="#070" d="M1045 461l7 3-7 2z"/>
                <text class="letter z" x="1024" y="186">Z</text>
                <text class="letter y" x="1696" y="579">Y</text>
                <rect x="1040" y="350" width="42" height="23" fill="#ffffe1" stroke="#606060"/>
                <text class="tip" x="1043" y="368">Box2</text>
            </svg>
        </section>
        <div class="splitter vertical slim"></div>
        <aside class="right"><header class="caption"></header></aside>
    </main>
    <script src="grid.js"></script>
</body>
</html>
```
FILE: styles.css
```css
* {
    box-sizing: border-box;
}
body {
    margin: 0;
    height: 100vh;
    display: flex;
    flex-direction: column;
    overflow: hidden;
    background: #f0f0f0;
    color: #1a1a1a;
    font-family: "Noto Sans", "Open Sans", sans-serif;
    font-size: 14px;
}
.defs {
    position: absolute;
    width: 0;
    height: 0;
}
a {
    color: inherit;
    text-decoration: none;
}
.titlebar {
    flex: none;
    height: 5px;
    background: #65758a;
}
.menubar {
    flex: none;
    display: flex;
    gap: 14px;
    height: 25px;
    line-height: 25px;
    font-size: 16px;
    color: #000;
    background: #fff;
}
.menubar a:first-child {
    width: 11px;
}

/* ribbon */
.ribbon {
    flex: none;
    display: flex;
    height: 97px;
    padding-top: 2px;
    border-top: 1px solid #c8c8dc;
    border-bottom: 1px solid #c8c8dc;
    background: #eeeef2;
    overflow: hidden;
}
.group {
    flex: none;
    display: flex;
    height: 90px;
    padding-top: 2px;
    border-right: 1px solid #c8c8dc;
}
.ribbon button {
    display: flex;
    align-items: center;
    gap: 3px;
    height: 26px;
    margin: 0;
    padding: 0;
    border: 0;
    background: none;
    color: inherit;
    font: inherit;
    white-space: nowrap;
}
.ribbon svg {
    flex: none;
    width: 20px;
    height: 20px;
}
.ribbon .off {
    color: #929292;
}
.ribbon .on {
    background: #cbcbcb;
}
.stack {
    display: flex;
    flex-direction: column;
    align-items: flex-start;
}
.icons {
    display: grid;
    grid-template-rows: repeat(3, 26px);
    grid-auto-flow: column;
    grid-auto-columns: 30px;
}
.icons button {
    justify-content: center;
}
.arrow {
    border: 4px solid transparent;
    border-top: 5px solid #666;
    border-bottom: 0;
    margin-left: 2px;
}
.sep {
    width: 1px;
    height: 77px;
    margin: 5px 4px 0 4px;
    background: #7888a0;
}
.combo {
    position: relative;
    display: block;
    width: 80px;
    height: 26px;
    flex: none;
}
.combo select {
    appearance: none;
    width: 100%;
    height: 100%;
    padding: 0 1px;
    border: 1px solid #d0d0dc;
    border-radius: 0;
    background: #fff;
    color: inherit;
    font: inherit;
}
.combo::after {
    content: "";
    position: absolute;
    right: 4px;
    top: 10px;
    border: 4px solid transparent;
    border-top: 5px solid #666;
    border-bottom: 0;
    pointer-events: none;
}
.field {
    display: flex;
    align-items: center;
}
.field label {
    width: 46px;
}
.g-edit {
    width: 155px;
    padding-left: 13px;
}
.g-edit .stack:first-child {
    width: 67px;
}
.g-select {
    width: 151px;
    padding-left: 8px;
}
.g-select .combo {
    width: 92px;
}
.g-show {
    width: 69px;
    padding-left: 3px;
}
.g-zoom {
    width: 146px;
    padding-left: 9px;
    gap: 5px;
}
.ribbon .big {
    flex-direction: column;
    width: 45px;
    height: 80px;
    gap: 2px;
    padding-top: 3px;
    line-height: 20px;
}
.ribbon .big svg {
    width: 36px;
    height: 38px;
}
.big .arrow {
    border-width: 6px 6px 0 6px;
    margin: 4px 0 0 0;
}
.g-zoom .arrow {
    flex: none;
}
.g-fit {
    width: 118px;
    padding-left: 9px;
}
.g-draw {
    width: 278px;
    padding-left: 4px;
}
.g-arrange {
    width: 522px;
    padding-left: 9px;
}
.s-move { width: 70px; }
.s-dup { width: 30px; }
.s-unite { width: 88px; }
.s-split { width: 74px; }
.s-sweep { width: 31px; }
.s-fillet { width: 87px; padding-left: 1px; }
.s-surf { width: 34px; padding-left: 1px; }
.s-cs { padding-left: 3px; }
.s-cs .arrow { margin-left: 5px; }
.s-surf .arrow { margin-left: 1px; }
.g-measure {
    width: 110px;
    padding-left: 6px;
}
.g-measure button {
    padding: 0 4px 0 3px;
}
.g-grid {
    width: 93px;
    padding-left: 6px;
}
.g-grid button {
    padding: 0 4px 0 3px;
}
.g-grid .combo {
    height: 25px;
}
.g-snap {
    width: 70px;
    padding-left: 3px;
}
.g-mat {
    border-right: 0;
    padding-left: 6px;
}

.tabs {
    flex: none;
    display: flex;
    height: 29px;
    line-height: 22px;
    margin-top: -4px;
    color: #444;
}
.tabs a {
    height: 27px;
    padding: 3px 15px 0 14px;
    border: 1px solid transparent;
    border-top: 0;
}
.tabs a:first-child {
    padding-left: 0;
    margin-left: -1px;
}
.tabs .active {
    background: #f0f0f0;
    border-color: #c8c8dc;
    color: #0c5ca0;
}

/* work area */
.work {
    flex: 1;
    min-height: 0;
    display: flex;
    padding-top: 1px;
}
.dock {
    flex: none;
    width: 200px;
    display: flex;
    flex-direction: column;
}
.manager {
    flex: none;
}
.props {
    flex: 1;
    min-height: 0;
    display: flex;
    flex-direction: column;
}
.caption {
    display: flex;
    align-items: center;
    gap: 12px;
    height: 30px;
    padding-right: 7px;
    border-bottom: 1px solid #b0b4bc;
    background: linear-gradient(#d4d9e0, #bcc2ca);
}
.caption h2 {
    flex: 1;
    margin: 0;
    font-size: 14px;
    font-weight: normal;
}
.caption svg {
    width: 12px;
    height: 12px;
}
.scroller {
    display: flex;
    height: 345px;
    background: #fff;
}
.tree {
    flex: 1;
    min-width: 0;
    margin: 0;
    padding: 0;
    overflow: hidden;
    list-style: none;
    color: #000;
    font-size: 15px;
}
.tree li {
    display: flex;
    align-items: center;
    height: 22px;
    white-space: nowrap;
}
.tree.small {
    font-size: 12px;
}
.tree.small li {
    height: 20px;
}
.tree svg {
    flex: none;
    width: 16px;
    height: 16px;
    margin: 0 4px 0 -4px;
}
.tree span {
    padding: 0 2px 0 1px;
}
.tree b, .tree .root {
    padding-left: 0;
    font-size: 13px;
}
.tree .hot {
    background: #f0f0f0;
    line-height: 19px;
}
.tree .selected {
    margin-left: -1px;
    padding-left: 2px;
    line-height: 20px;
    color: #fff;
    background: #0078d7;
    outline: 1px dotted #c06000;
}
.rail {
    position: relative;
    flex: none;
    width: 22px;
    height: 100%;
}
.rail::before {
    content: "";
    position: absolute;
    left: 4px;
    right: 5px;
    top: 50%;
    border-top: 1px dotted #777;
}
.rail.pass::before {
    display: none;
}
.rail.on {
    background: repeating-linear-gradient(#888 0 1px, #fff 1px 2px) 4px 0 / 1px 100% no-repeat;
}
.rail.up {
    background: repeating-linear-gradient(#888 0 1px, #fff 1px 2px) 4px 0 / 1px 50% no-repeat;
}
.rail.down {
    background: repeating-linear-gradient(#888 0 1px, #fff 1px 2px) 4px 100% / 1px 50% no-repeat;
}
.rail.box::after {
    content: "";
    position: absolute;
    left: 0;
    top: calc(50% - 4px);
    width: 9px;
    height: 9px;
    border: 1px solid #777;
    background: linear-gradient(#000, #000) 1px 3px / 5px 1px no-repeat, #fff;
}
.rail.plus::after {
    background: linear-gradient(#000, #000) 1px 3px / 5px 1px no-repeat, linear-gradient(#000, #000) 3px 1px / 1px 5px no-repeat, #fff;
}
.vbar {
    flex: none;
    display: flex;
    flex-direction: column;
    width: 20px;
    background: #f0f0f0;
}
.vbar svg {
    flex: none;
    height: 21px;
}
.vbar .thumb {
    height: 270px;
    margin-bottom: 31px;
    background: #cdcdcd;
}
.hbar {
    display: flex;
    align-items: center;
    justify-content: space-between;
    height: 19px;
    padding-right: 26px;
}
.hbar .thumb {
    width: 144px;
    height: 19px;
    background: #cdcdcd;
}
.hbar svg {
    width: 12px;
    height: 12px;
}
.splitter {
    flex: none;
    height: 7px;
    background: repeating-conic-gradient(#405080 0 25%, #8a8a8a 0 50%) 0 0 / 4px 4px;
}
.splitter.vertical {
    width: 8px;
    height: auto;
    border-right: 2px solid #6c6c6c;
}
.splitter.slim {
    width: 6px;
    border-right: 0;
    margin-left: 3px;
}
.sheet {
    flex: 1;
    margin: 5px 4px 0 0;
    padding: 3px 5px 0 0;
    border-top: 1px solid #fafafa;
    border-right: 1px solid #777;
    background: linear-gradient(#f0f0f0, #f0f0f0) 100% 0 / 5px 100% no-repeat, #fff;
}
table {
    width: 190px;
    border-collapse: collapse;
    table-layout: fixed;
    border-top: 1px solid #555;
    font-size: 15px;
    color: #000;
}
th, td {
    height: 27px;
    padding: 0 0 0 2px;
    border-right: 1px solid #c0c0c0;
    border-bottom: 1px solid #c0c0c0;
    line-height: 20px;
    text-align: left;
    white-space: nowrap;
    overflow: hidden;
}
th {
    font-weight: normal;
    background: #f0f0f0;
    border-right-color: #777;
    border-bottom: 1px solid #666;
}
td:first-child, th:first-child {
    padding: 0 1px 0 0;
    text-align: right;
}
td.left:first-child {
    text-align: left;
}
th:first-child {
    padding-right: 10px;
}
.c-name { width: 25px; }
.c-value { width: 34px; }
.c-unit { width: 44px; }
th.c-unit {
    text-align: center;
}

.history {
    flex: none;
    width: 218px;
    padding: 1px 0 0 3px;
    border-top: 1px solid #666;
    border-right: 1px solid #fff;
    background: #fff;
}
.history span {
    margin-left: 1px;
}
.viewport {
    flex: 1;
    min-width: 0;
    margin-left: 5px;
    border-top: 1px solid #666;
    border-left: 1px solid #777;
    background: #fff;
}
.viewport svg {
    display: block;
    width: 100%;
    height: 100%;
}
.right {
    flex: none;
    width: 7px;
}

/* scene */
.face {
    fill: #a1bba1;
    fill-opacity: .96;
}
.minor { stroke: #dedeec; }
.major { stroke: #c6c6de; }
.neg-x { stroke: #8cc08c; fill: none; }
.neg-y { stroke: #e08888; fill: none; }
.ghost-y { stroke: #a8a48c; fill: none; }
.edge {
    fill: none;
    stroke: #d414d4;
    stroke-width: 2px;
}
.hidden {
    fill: none;
    stroke: #e67ce6;
    stroke-width: 1.5px;
}
.hidden.wide {
    stroke-width: 2px;
}
.pale {
    fill: none;
    stroke: #f0d4ec;
}
.dash {
    stroke-dasharray: 3 2;
}
.stitch {
    fill: none;
    stroke: #404a40;
    stroke-dasharray: 2 4;
}
.stitch.green {
    stroke: #10c010;
    stroke-width: 2px;
    stroke-dasharray: 4 4;
}
.corner {
    fill: none;
    stroke: #3c5040;
}
.axis {
    fill: none;
}
.axis.x { stroke: #f01408; stroke-width: 1.5px; }
.axis.y { stroke: #089008; stroke-width: 2px; }
.axis.z { stroke: #4068d8; stroke-width: 1.5px; }
.letter {
    font: 17px "Liberation Sans", sans-serif;
}
.letter.z { fill: #4a6cd8; stroke: #4a6cd8; }
.letter.y { fill: #3a9c3a; }
.tip {
    font-size: 15px;
}
```
FILE: grid.js
```javascript
// drawing-plane grid, 0.1in pitch, every fifth line is major
const ORIGIN = [1024, 460];
const STEP_X = [-8.8, 14.1];
const STEP_Y = [26.4, 4.7];
const N = 60;

const grid = document.getElementById('grid');

function addLine(step, dir, k) {
    const cx = ORIGIN[0] + step[0] * k;
    const cy = ORIGIN[1] + step[1] * k;
    const line = document.createElementNS('http://www.w3.org/2000/svg', 'line');
    line.setAttribute('x1', cx - dir[0] * N);
    line.setAttribute('y1', cy - dir[1] * N);
    line.setAttribute('x2', cx + dir[0] * N);
    line.setAttribute('y2', cy + dir[1] * N);
    line.setAttribute('class', k % 5 === 0 ? 'major' : 'minor');
    grid.appendChild(line);
}

for (let k = -N; k <= N; k++) {
    addLine(STEP_X, STEP_Y, k);
    addLine(STEP_Y, STEP_X, k);
}
```
